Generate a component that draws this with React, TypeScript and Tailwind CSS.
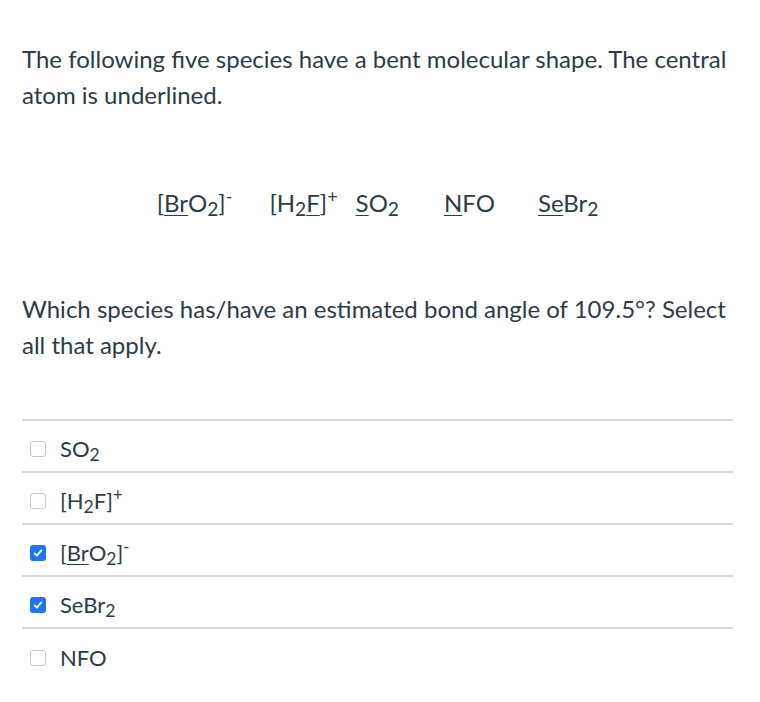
import React from 'react'

const font = { fontFamily: 'Lato, "Noto Sans", sans-serif' }

function Sub({ children }: { children: React.ReactNode }) {
  return <sub className="text-[0.8em] relative top-[0.2em] align-baseline">{children}</sub>
}

function Sup({ children }: { children: React.ReactNode }) {
  return <sup className="text-[0.75em] relative -top-[0.5em] align-baseline">{children}</sup>
}

function U({ children }: { children: React.ReactNode }) {
  return <span className="underline decoration-1 underline-offset-[3px]">{children}</span>
}

function Box({ checked }: { checked: boolean }) {
  if (checked) {
    return (
      <span className="w-4 h-4 rounded-[3px] bg-[#1f75f0] flex items-center justify-center shrink-0">
        <svg viewBox="0 0 16 16" className="w-3 h-3">
          <path d="M3.5 8.5 L6.5 11.5 L12.5 4.5" fill="none" stroke="white" strokeWidth="2.4" strokeLinecap="round" strokeLinejoin="round" />
        </svg>
      </span>
    )
  }
  return <span className="w-4 h-4 rounded-[3px] border border-[#c8c8c8] bg-white shrink-0" />
}

const options: { label: React.ReactNode; checked: boolean }[] = [
  { label: <>SO<Sub>2</Sub></>, checked: false },
  { label: <>[H<Sub>2</Sub>F]<Sup>+</Sup></>, checked: false },
  { label: <>[<U>Br</U>O<Sub>2</Sub>]<Sup>-</Sup></>, checked: true },
  { label: <>SeBr<Sub>2</Sub></>, checked: true },
  { label: <>NFO</>, checked: false },
]

export default function App() {
  return (
    <div className="w-[760px] h-[702px] bg-white text-[#2d3b45]" style={font}>
      <div className="pl-[22px] pr-[27px] pt-[41px]">
        <p className="text-[24px] leading-[36px]">
          The following five species have a bent molecular shape. The central atom is underlined.
        </p>

        <div className="mt-[75px] flex justify-center text-[24px] leading-[30px]">
          <span>[<U>Br</U>O<Sub>2</Sub>]<Sup>-</Sup></span>
          <span className="ml-[37px]">[H<Sub>2</Sub><U>F</U>]<Sup>+</Sup></span>
          <span className="ml-[18px]"><U>S</U>O<Sub>2</Sub></span>
          <span className="ml-[45px]"><U>N</U>FO</span>
          <span className="ml-[43px]"><U>Se</U>Br<Sub>2</Sub></span>
        </div>

        <p className="mt-[73px] text-[24px] leading-[36px]">
          Which species has/have an estimated bond angle of 109.5°? Select all that apply.
        </p>

        <div className="mt-[56px] border-t-2 border-[#d5d5d5]">
          {options.map((o, i) => (
            <div
              key={i}
              className={`h-[52px] flex items-center gap-[14px] pl-[8px] pt-[6px] ${i < options.length - 1 ? 'border-b-2 border-[#d5d5d5]' : ''}`}
            >
              <Box checked={o.checked} />
              <span className="text-[22px] leading-[30px]">{o.label}</span>
            </div>
          ))}
        </div>
      </div>
    </div>
  )
}
